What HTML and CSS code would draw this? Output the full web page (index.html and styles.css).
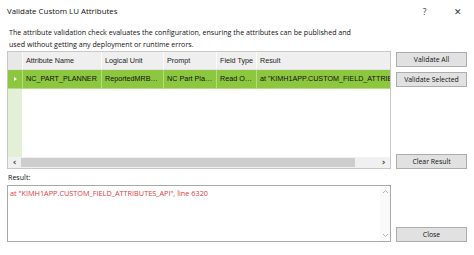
FILE: index.html
```html
<!DOCTYPE html>
<html>
<head>
<meta charset="utf-8">
<link rel="stylesheet" href="styles.css">
</head>
<body>
<div class="dialog">
  <div class="titlebar">
    <span class="title">Validate Custom LU Attributes</span>
    <span class="tb-btns"><span class="help">?</span><span class="close-x">✕</span></span>
  </div>
  <div class="desc">
    The attribute validation check evaluates the configuration, ensuring the attributes can be published and<br>
    used without getting any deployment or runtime errors.
  </div>
  <div class="content">
    <div class="grid">
      <div class="grid-body">
        <div class="row head">
          <div class="cell rh"></div>
          <div class="cell c1">Attribute Name</div>
          <div class="cell c2">Logical Unit</div>
          <div class="cell c3">Prompt</div>
          <div class="cell c4 clip">Field Type</div>
          <div class="cell c5">Result</div>
        </div>
        <div class="row sel">
          <div class="cell rh"><span class="tri"></span></div>
          <div class="cell c1">NC_PART_PLANNER</div>
          <div class="cell c2">ReportedMRBCause</div>
          <div class="cell c3">NC Part Planner</div>
          <div class="cell c4">Read Only</div>
          <div class="cell c5 clip">at "KIMH1APP.CUSTOM_FIELD_ATTRIBUTES_API", line 6320</div>
        </div>
        <div class="row empty">
          <div class="cell rh"></div>
        </div>
      </div>
      <div class="hscroll">
        <span class="arr">&lsaquo;</span>
        <span class="thumb"></span>
        <span class="arr">&rsaquo;</span>
      </div>
    </div>
    <div class="btns-top">
      <div class="stack">
        <button class="btn">Validate All</button>
        <button class="btn">Validate Selected</button>
      </div>
      <button class="btn">Clear Result</button>
    </div>
    <div class="label">Result:</div>
    <div></div>
    <div class="result">
      <div class="result-text">at "KIMH1APP.CUSTOM_FIELD_ATTRIBUTES_API", line 6320</div>
      <div class="vscroll">
        <svg width="7" height="5" viewBox="0 0 7 5"><path d="M1 4 L3.5 1.5 L6 4" fill="none" stroke="#b0b0b0" stroke-width="1"/></svg>
        <svg width="7" height="5" viewBox="0 0 7 5"><path d="M1 1 L3.5 3.5 L6 1" fill="none" stroke="#b0b0b0" stroke-width="1"/></svg>
      </div>
    </div>
    <div class="btns-bottom">
      <button class="btn">Close</button>
    </div>
  </div>
</div>
</body>
</html>
```
FILE: styles.css
```css
* { box-sizing: border-box; }
html, body { margin: 0; padding: 0; background: #ffffff; }
body {
  width: 474px;
  height: 255px;
  overflow: hidden;
  font-family: "Open Sans", "Noto Sans", sans-serif;
  color: #000;
}
.dialog { width: 474px; height: 255px; }
.titlebar {
  height: 22px;
  display: flex;
  align-items: center;
  justify-content: space-between;
  padding: 0 0 0 7px;
  font-size: 7.9px;
  color: #111;
}
.tb-btns { display: flex; align-items: center; }
.help { width: 33px; text-align: center; font-size: 8.5px; color: #333; }
.close-x { width: 33px; text-align: center; font-size: 9px; color: #333; margin-right: 0; }
.desc {
  padding: 4px 9px 0 9px;
  font-size: 7.1px;
  line-height: 12px;
  height: 29px;
  color: #111;
}
.content {
  display: grid;
  grid-template-columns: 384px 71px;
  grid-template-rows: 118px 16px 57px;
  column-gap: 5px;
  padding-left: 7px;
}
.grid {
  border: 1px solid #c8c8c8;
  display: flex;
  flex-direction: column;
  background: #fff;
  font-family: "Liberation Sans", Arial, sans-serif;
  font-size: 7.2px;
  overflow: hidden;
}
.grid-body { flex: 1; display: flex; flex-direction: column; }
.row { display: flex; }
.cell {
  padding: 0 3px;
  white-space: nowrap;
  overflow: hidden;
  text-overflow: ellipsis;
  display: block;
}
.cell.clip { text-overflow: clip; }
.rh { width: 14px; flex: none; padding: 0; display: flex; align-items: center; justify-content: center; }
.c1 { width: 79px; flex: none; }
.c2 { width: 62px; flex: none; }
.c3 { width: 53px; flex: none; }
.c4 { width: 40px; flex: none; }
.head .c4 { padding: 0 0 0 3px; }
.c5 { flex: 1; min-width: 0; }
.head { height: 18px; line-height: 17px; background: #efefef; color: #222; border-bottom: 1px solid #e2e2e2; }
.head .cell + .cell { border-left: 1px solid #fbfbfb; }
.head .rh { background: #e8e8e8; }
.sel { height: 19px; line-height: 18px; background: #8dc63f; color: #111; border-bottom: 1px solid #b5dc82; }
.sel .cell + .cell { border-left: 1px solid #b5dc82; }
.sel .rh { background: #8dc63f; }
.tri {
  width: 0; height: 0;
  border-top: 2.5px solid transparent;
  border-bottom: 2.5px solid transparent;
  border-left: 3px solid #ffffff;
}
.empty { flex: 1; }
.empty .rh { background: #e3efd6; }
.hscroll {
  height: 11px;
  flex: none;
  display: flex;
  align-items: center;
  background: #f0f0f0;
}
.arr { width: 13px; text-align: center; line-height: 11px; font-family: "DejaVu Sans", sans-serif; font-size: 9px; font-weight: bold; color: #444; }
.thumb { flex: 1; height: 9px; background: #cdcdcd; margin-right: 22px; }
.btns-top { display: flex; flex-direction: column; justify-content: space-between; padding-top: 1px; }
.stack { display: flex; flex-direction: column; gap: 5px; }
.btn {
  height: 15px;
  width: 71px;
  padding: 0;
  margin: 0;
  border: 1px solid #adadad;
  background: #e1e1e1;
  font-family: "Open Sans", "Noto Sans", sans-serif;
  font-size: 6.9px;
  color: #111;
  line-height: 13px;
  white-space: nowrap;
  overflow: hidden;
}
.label { font-size: 7.1px; display: flex; align-items: center; padding-left: 1px; color: #111; }
.result {
  border: 1px solid #a8a8a8;
  display: flex;
  background: #fff;
}
.result-text {
  flex: 1;
  color: #e03a3a;
  font-size: 7.3px;
  padding: 2px 2px 0;
  line-height: 10px;
}
.vscroll {
  width: 10px;
  display: flex;
  flex-direction: column;
  justify-content: space-between;
  align-items: center;
  padding: 3px 0 3px;
  background: #fafafa;
}
.btns-bottom { display: flex; align-items: flex-end; }
```
